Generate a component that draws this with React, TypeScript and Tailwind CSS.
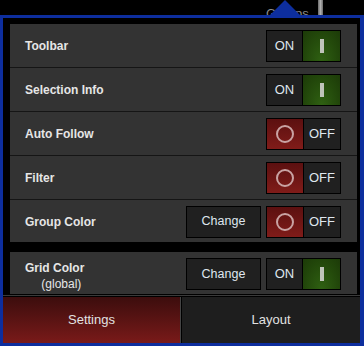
import React from "react"

type Row = {
    label: string
    on: boolean
    change?: boolean
}

const rows: Row[] = [
    { label: "Toolbar", on: true },
    { label: "Selection Info", on: true },
    { label: "Auto Follow", on: false },
    { label: "Filter", on: false },
    { label: "Group Color", on: false, change: true },
]

function Toggle({ on }: { on: boolean }) {
    if (on) {
        return (
            <div className="flex h-[32px] w-[75px] border border-black">
                <div className="flex w-[36px] items-center justify-center border-r border-black bg-[#202020] text-[13px] text-[#dfe6ee]">ON</div>
                <div className="flex flex-1 items-center justify-center bg-[radial-gradient(ellipse_at_50%_100%,#2f6012_0%,#21450a_70%,#1c3a08_100%)]">
                    <div className="h-[14px] w-[4px] bg-[#bfc4ba]"></div>
                </div>
            </div>
        )
    }
    return (
        <div className="flex h-[32px] w-[75px] border border-black">
            <div className="flex w-[37px] items-center justify-center border-r border-black bg-gradient-to-b from-[#5c1010] to-[#801c19]">
                <div className="h-[18px] w-[18px] rounded-full border-2 border-[#c9a3a3]"></div>
            </div>
            <div className="flex flex-1 items-center justify-center bg-[#202020] text-[13px] text-[#dfe6ee]">OFF</div>
        </div>
    )
}

function ChangeButton() {
    return (
        <div className="flex h-[32px] w-[75px] items-center justify-center border border-black bg-[#202020] text-[12.5px] text-[#dfe6ee]">
            Change
        </div>
    )
}

export default function App() {
    return (
        <div className="h-[346px] w-[364px] overflow-hidden bg-black font-['Liberation_Sans',Arial,sans-serif]">
            <div className="relative h-[15px]">
                <span className="absolute left-[266px] top-[4px] text-[13px] text-[#8c8c8c]">Groups</span>
                <div className="absolute left-[270px] top-0 h-0 w-0 border-x-[15px] border-b-[15px] border-x-transparent border-b-[#0d2e9e]"></div>
                <div className="absolute left-[318px] top-0 h-[15px] w-[5px] bg-gradient-to-r from-[#6a6a6a] via-[#b0b0b0] to-[#6a6a6a]"></div>
            </div>
            <div className="relative flex h-[331px] flex-col border-b-[3px] border-l-[3px] border-r-[4px] border-t-[3px] border-[#0d2e9e] bg-black">
                <div className="pl-[7px] pr-[3px] pt-[6px]">
                    <div className="h-[218px] overflow-hidden">
                        {rows.map((row) => (
                            <div key={row.label} className="flex h-[44px] items-center justify-between border-b border-[#151515] bg-[#333333] pl-[15px] pr-[16px]">
                                <span className="text-[12px] font-bold text-[#e6e6e6]">{row.label}</span>
                                <div className="flex gap-[5px]">
                                    {row.change && <ChangeButton />}
                                    <Toggle on={row.on} />
                                </div>
                            </div>
                        ))}
                    </div>
                    <div className="mt-[10px] flex h-[42px] items-start justify-between overflow-hidden bg-[#333333] pl-[15px] pr-[16px] pt-[6px]">
                        <div className="flex flex-col items-end pt-[2px] text-[12px] leading-[16px] text-[#e6e6e6]">
                            <span className="font-bold">Grid Color</span>
                            <span className="pr-[3px]">(global)</span>
                        </div>
                        <div className="flex gap-[5px]">
                            <ChangeButton />
                            <Toggle on={true} />
                        </div>
                    </div>
                </div>
                <div className="mt-[1px] h-[1px] bg-[#3a3a3a]"></div>
                <div className="mt-[1px] flex flex-1 text-[13px] text-[#e2e2e2]">
                    <div className="flex w-[177px] items-center justify-center bg-gradient-to-b from-[#3c0d0d] to-[#7a1a19]">Settings</div>
                    <div className="w-[1px] bg-[#444444]"></div>
                    <div className="w-[1px] bg-black"></div>
                    <div className="flex flex-1 items-center justify-center bg-[#1e1e1e]">Layout</div>
                </div>
            </div>
        </div>
    )
}
